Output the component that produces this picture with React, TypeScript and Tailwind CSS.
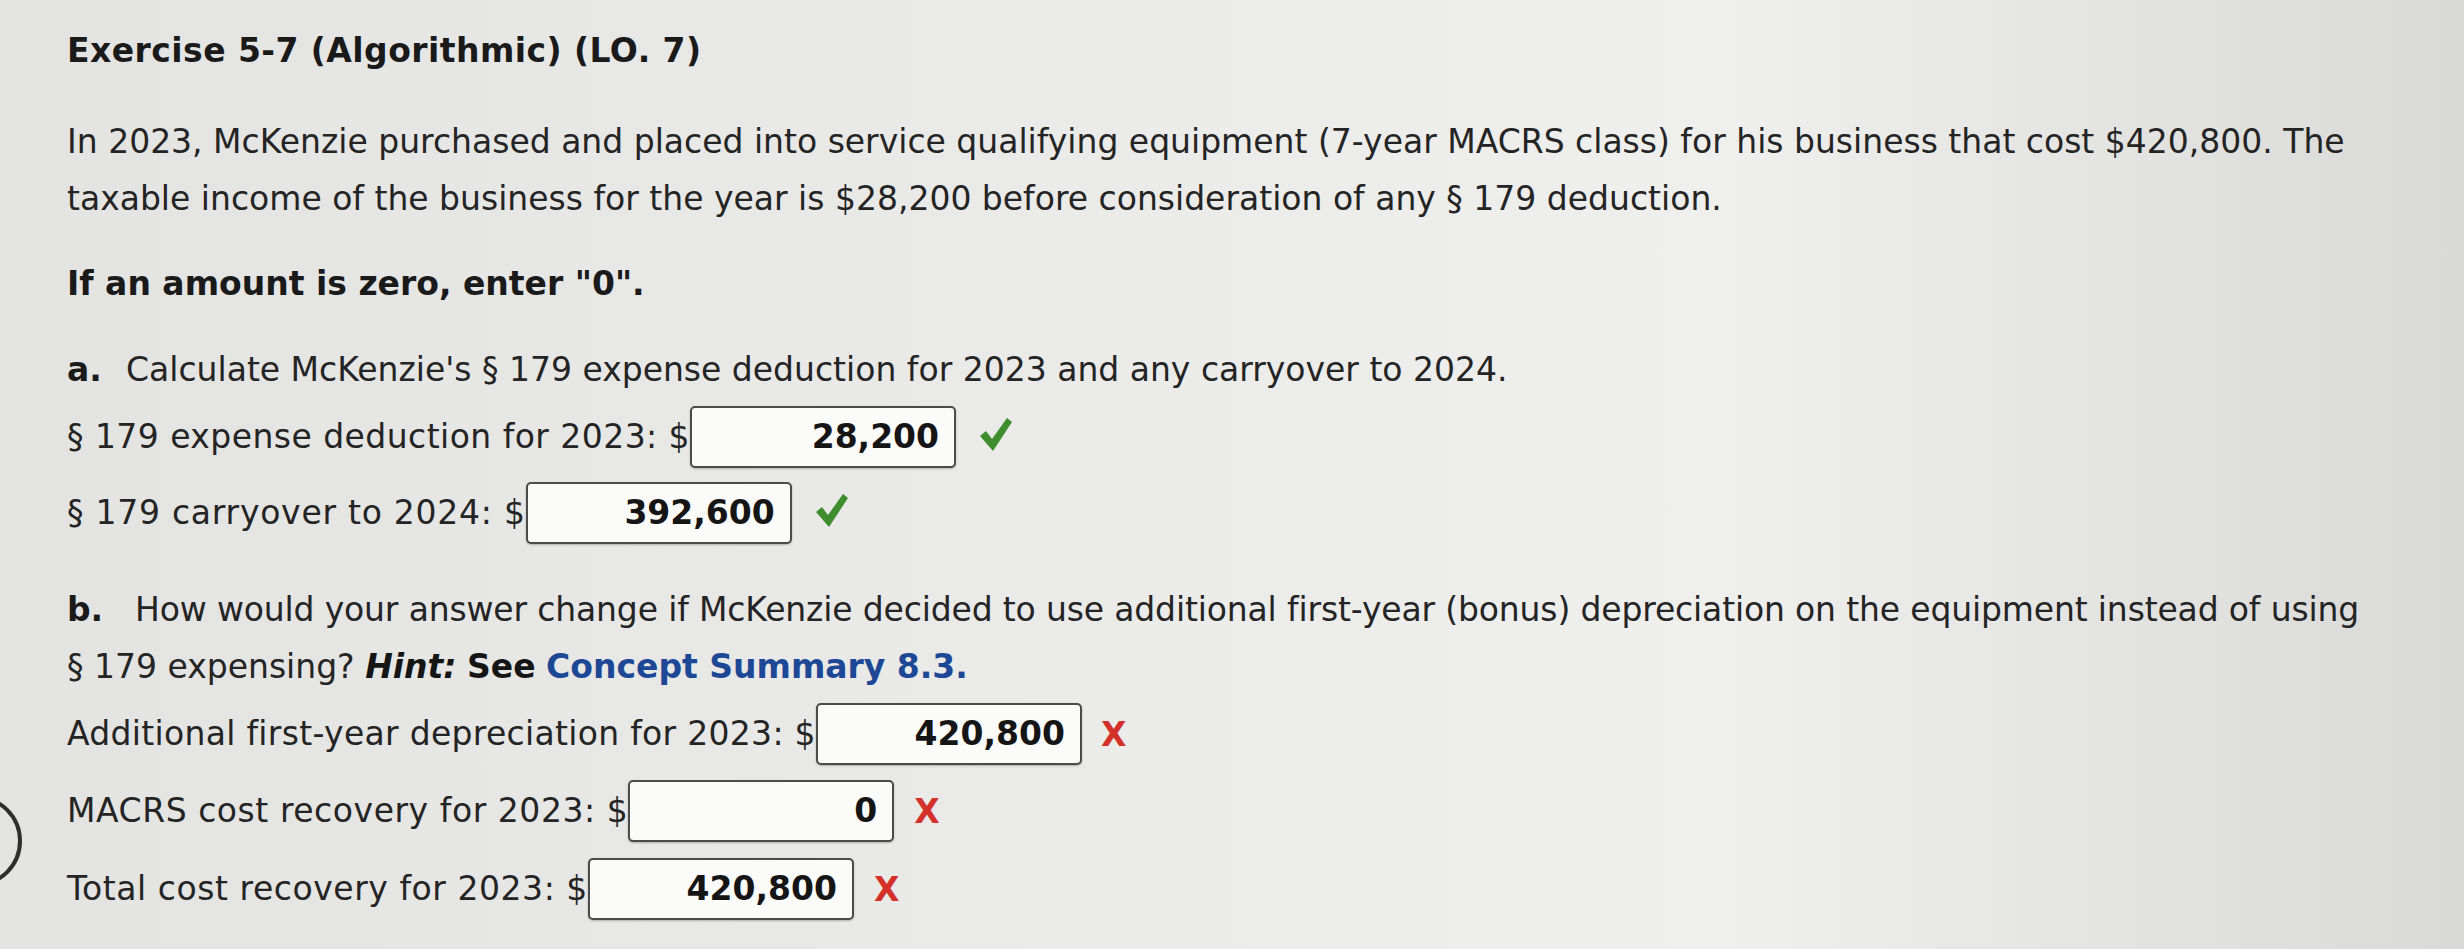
import React from "react";

function Check() {
  return (
    <svg width="32" height="34" viewBox="0 0 32 34" className="ml-[24px] shrink-0 -mt-[4px]">
      <polygon points="0,18 6,13 12,21 27,0 32,4 13,33" fill="#3f8d2e" />
    </svg>
  );
}

function Cross({ ml }: { ml: string }) {
  return <span className={`${ml} font-bold text-[#d3312a] leading-none`}>X</span>;
}

function Box({ value }: { value: string }) {
  return (
    <div className="w-[266px] h-[62px] shrink-0 border-2 border-[#4b4b4b] rounded-[5px] bg-[#fbfbfa] shadow-[0_1px_2px_rgba(0,0,0,0.25)] flex items-center justify-end pr-[15px] font-bold text-[#151515] tracking-normal">
      {value}
    </div>
  );
}

export default function App() {
  return (
    <div className="relative w-full min-h-[949px] overflow-hidden bg-linear-to-r from-[#e3e3e1] via-[#efefed] via-70% to-[#d9d9d7] font-['DejaVu_Sans',Verdana,sans-serif] text-[33px] text-[#242424]">
      <div className="absolute left-[-70px] top-[795px] w-[92px] h-[92px] rounded-full border-[4px] border-[#2e2e2e]" />
      <div className="pl-[67px] pt-[22px]">
        <div className="font-bold text-[#1a1a1a] leading-[57px] whitespace-nowrap tracking-[0.45px]">
          Exercise 5-7 (Algorithmic) (LO. 7)
        </div>

        <div className="mt-[34px] leading-[57px] whitespace-nowrap">
          In 2023, McKenzie purchased and placed into service qualifying equipment (7-year MACRS class) for his business that cost $420,800. The
          <br />
          taxable income of the business for the year is $28,200 before consideration of any § 179 deduction.
        </div>

        <div className="mt-[28px] font-bold text-[#1a1a1a] leading-[57px] whitespace-nowrap">
          If an amount is zero, enter "0".
        </div>

        <div className="mt-[29px] leading-[57px] whitespace-nowrap">
          <span className="inline-block w-[59px] font-bold text-[#1a1a1a]">a.</span>
          Calculate McKenzie's § 179 expense deduction for 2023 and any carryover to 2024.
        </div>

        <div className="mt-[8px] flex items-center h-[62px] whitespace-nowrap tracking-[0.45px]">
          <span>§ 179 expense deduction for 2023: $</span>
          <Box value="28,200" />
          <Check />
        </div>

        <div className="mt-[14px] flex items-center h-[62px] whitespace-nowrap tracking-[0.75px]">
          <span>§ 179 carryover to 2024: $</span>
          <Box value="392,600" />
          <Check />
        </div>

        <div className="mt-[37px] leading-[57px] whitespace-nowrap">
          <span className="inline-block w-[68px] font-bold text-[#1a1a1a]">b.</span>
          <span className="tracking-[-0.15px]">
            How would your answer change if McKenzie decided to use additional first-year (bonus) depreciation on the equipment instead of using
          </span>
          <br />
          § 179 expensing? <span className="font-bold italic text-[#151515]">Hint:</span>{" "}
          <span className="font-bold text-[#151515]">See</span>{" "}
          <span className="font-bold text-[#1c4896]">Concept Summary 8.3.</span>
        </div>

        <div className="mt-[8px] flex items-center h-[62px] whitespace-nowrap tracking-[0.3px]">
          <span>Additional first-year depreciation for 2023: $</span>
          <Box value="420,800" />
          <Cross ml="ml-[19px]" />
        </div>

        <div className="mt-[15px] flex items-center h-[62px] whitespace-nowrap tracking-[0.55px]">
          <span>MACRS cost recovery for 2023: $</span>
          <Box value="0" />
          <Cross ml="ml-[20px]" />
        </div>

        <div className="mt-[16px] flex items-center h-[62px] whitespace-nowrap tracking-[0.55px]">
          <span>Total cost recovery for 2023: $</span>
          <Box value="420,800" />
          <Cross ml="ml-[20px]" />
        </div>
      </div>
    </div>
  );
}
